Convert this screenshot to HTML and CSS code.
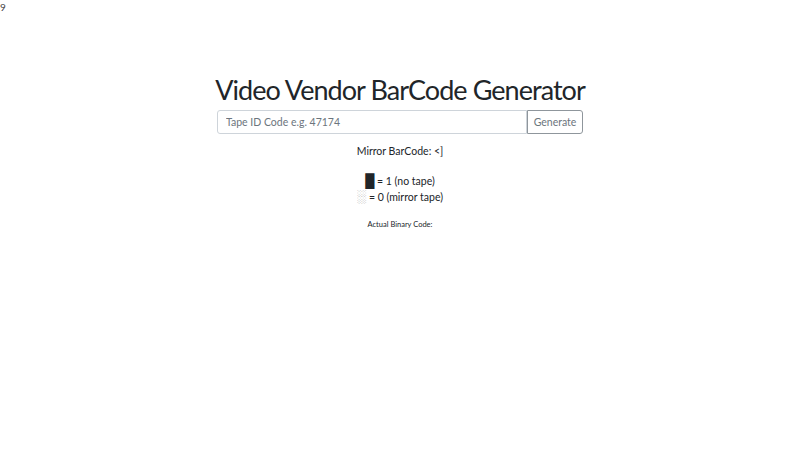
FILE: index.html
```html
<!DOCTYPE html>
<html lang="en">
<head>
    <meta charset="UTF-8">
    <meta name="viewport" content="width=device-width, initial-scale=1.0">
    <title>Video Vendor BarCode Generator</title>
    <link rel="stylesheet" href="styles.css">
</head>
<body>
    <div class="counter">9</div>
    <div class="container">
        <h1>Video Vendor BarCode Generator</h1>

        <div class="input-group">
            <input type="text" id="tapeId" placeholder="Tape ID Code e.g. 47174">
            <button>Generate</button>
        </div>

        <p class="mirror">Mirror BarCode: &lt;]</p>

        <div class="legend">
            <div><span class="bar">█</span> = 1 (no tape)</div>
            <div><span class="bar light">░</span> = 0 (mirror tape)</div>
        </div>

        <p class="binary">Actual Binary Code:</p>
    </div>
</body>
</html>
```

FILE: styles.css
```css
body {
    font-family: Lato, "Noto Sans", sans-serif;
    margin: 0;
    color: #212529;
    background: white;
}
.counter {
    font-size: 10px;
    line-height: 14px;
    color: #444;
}
.container {
    width: 366px;
    margin: 0 auto;
    padding-top: 57px;
    text-align: center;
}
h1 {
    font-weight: 400;
    font-size: 27px;
    line-height: 38px;
    letter-spacing: -0.95px;
    margin: 0 -20px;
    white-space: nowrap;
}
.input-group {
    display: flex;
    height: 24px;
    margin-top: 1px;
}
.input-group input {
    flex: 1;
    min-width: 0;
    font-family: inherit;
    font-size: 10.5px;
    padding: 0 8px;
    border: 1px solid #ced4da;
    border-radius: 3px 0 0 3px;
    box-sizing: border-box;
    color: #495057;
}
.input-group input::placeholder {
    color: #6c757d;
}
.input-group button {
    width: 56px;
    font-family: inherit;
    font-size: 10.5px;
    background: white;
    color: #6c757d;
    border: 1px solid #8f969c;
    border-radius: 0 3px 3px 0;
    padding: 0;
    cursor: pointer;
}
.mirror {
    font-size: 10.5px;
    margin: 10px 0 0;
    line-height: 15px;
}
.legend {
    margin-top: 14px;
    font-size: 10.5px;
    line-height: 15px;
}
.bar {
    font-size: 13px;
}
.light {
    color: #999;
}
.binary {
    font-size: 7.5px;
    margin: 15px 0 0;
}
```
